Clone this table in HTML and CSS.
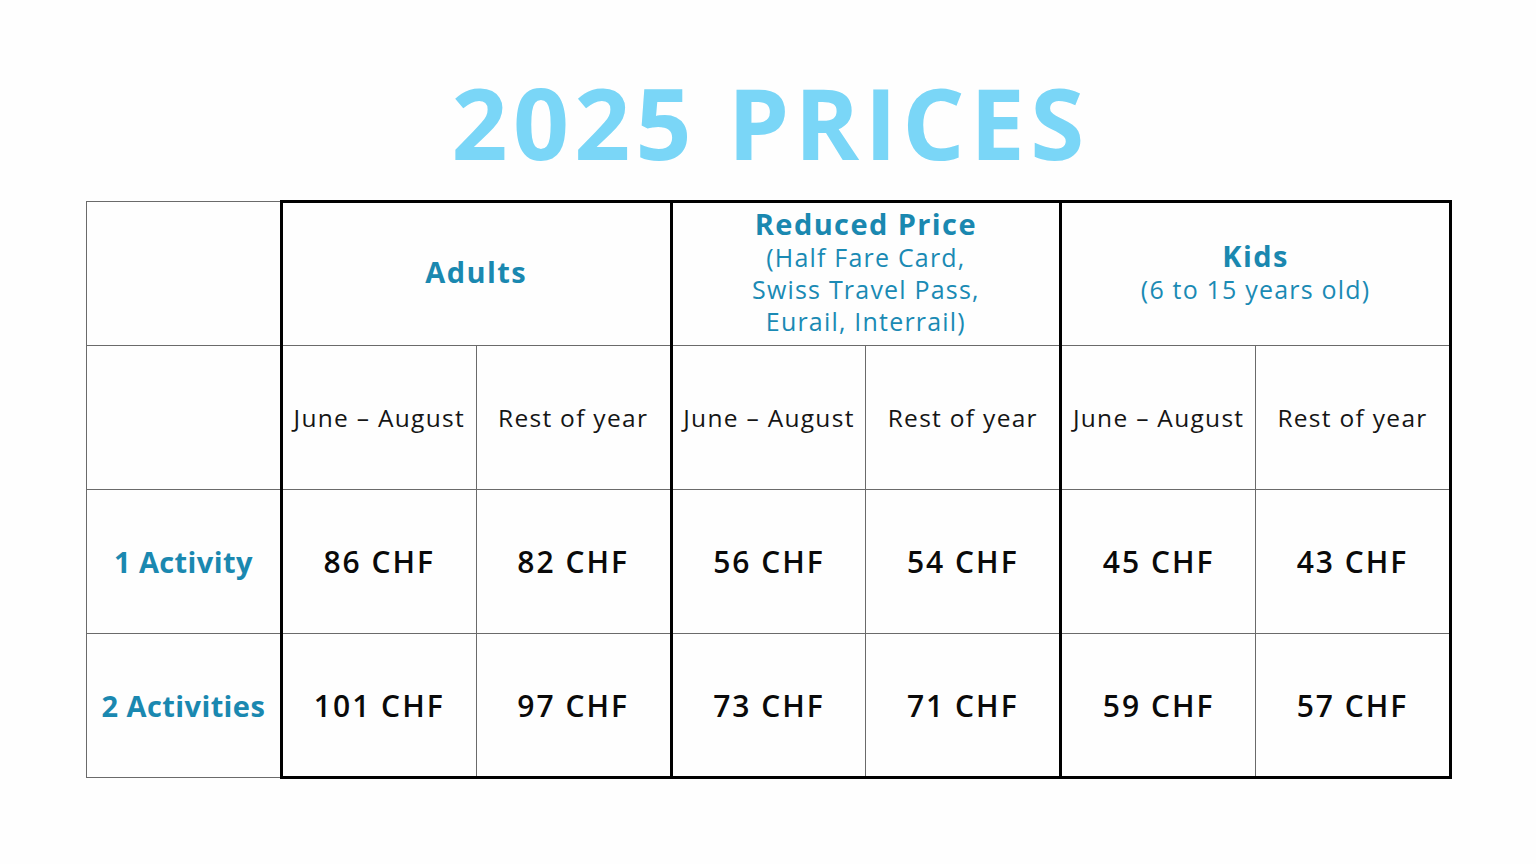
FILE: index.html
```html
<!DOCTYPE html>
<html lang="en">
<head>
<meta charset="utf-8">
<title>2025 Prices</title>
<link rel="stylesheet" href="styles.css">
</head>
<body>
<main class="page">
  <h1 class="title">2025 PRICES</h1>
  <table class="prices">
    <tr class="row-head">
      <td class="side top"></td>
      <th colspan="2" class="grp top"><span class="h">Adults</span></th>
      <th colspan="2" class="grp top"><span class="h">Reduced Price</span><span class="sub">(Half Fare Card,<br>Swiss Travel Pass,<br>Eurail, Interrail)</span></th>
      <th colspan="2" class="grp top right"><span class="h">Kids</span><span class="sub">(6 to 15 years old)</span></th>
    </tr>
    <tr>
      <td class="side"></td>
      <td class="season gl">June – August</td>
      <td class="season">Rest of year</td>
      <td class="season gl">June – August</td>
      <td class="season">Rest of year</td>
      <td class="season gl">June – August</td>
      <td class="season right">Rest of year</td>
    </tr>
    <tr>
      <th class="side label">1 Activity</th>
      <td class="price gl">86 CHF</td>
      <td class="price">82 CHF</td>
      <td class="price gl">56 CHF</td>
      <td class="price">54 CHF</td>
      <td class="price gl">45 CHF</td>
      <td class="price right">43 CHF</td>
    </tr>
    <tr class="row-last">
      <th class="side label">2 Activities</th>
      <td class="price gl bottom">101 CHF</td>
      <td class="price bottom">97 CHF</td>
      <td class="price gl bottom">73 CHF</td>
      <td class="price bottom">71 CHF</td>
      <td class="price gl bottom">59 CHF</td>
      <td class="price right bottom">57 CHF</td>
    </tr>
  </table>
</main>
</body>
</html>
```

FILE: styles.css
```css
* { box-sizing: border-box; }
html, body {
  margin: 0;
  padding: 0;
  background: #fefefe;
}
body {
  font-family: "Open Sans", "Liberation Sans", sans-serif;
  color: #111;
  width: 1536px;
  height: 864px;
  overflow: hidden;
}
.page {
  display: flex;
  flex-direction: column;
  align-items: center;
  padding-top: 66px;
}
.title {
  margin: 0;
  font-size: 98px;
  line-height: 113px;
  font-weight: 700;
  color: #7ad6f7;
  letter-spacing: 5.3px;
  padding-left: 5px;
}
.prices {
  margin-top: 21px;
  margin-left: 2px;
  border-collapse: collapse;
  table-layout: fixed;
  width: 1366px;
}
.prices tr { height: 144px; }
.prices td, .prices th {
  border: 1px solid #6a6a6a;
  text-align: center;
  vertical-align: middle;
  padding: 0;
}
.grp {
  border-left: 3px solid #000 !important;
  border-top: 3px solid #000 !important;
  font-weight: 400;
  color: #1a88b0;
  padding-bottom: 4px !important;
}
.gl { border-left: 3px solid #000 !important; }
.right { border-right: 3px solid #000 !important; }
.bottom { border-bottom: 3px solid #000 !important; }
.h {
  display: block;
  font-size: 29px;
  font-weight: 700;
  line-height: 34px;
  letter-spacing: 1.4px;
  color: #1a88b0;
}
.sub {
  display: block;
  font-size: 25px;
  line-height: 32px;
  letter-spacing: 1.2px;
  color: #1a8ab4;
  font-weight: 400;
}
.season {
  font-size: 24.5px;
  font-weight: 400;
  letter-spacing: 1.3px;
  color: #151515;
  white-space: nowrap;
}
.price {
  font-size: 30px;
  font-weight: 600;
  letter-spacing: 2px;
  color: #0a0a0a;
}
.label {
  font-size: 29px;
  font-weight: 700;
  letter-spacing: 0.4px;
  color: #1a88b0;
  white-space: nowrap;
}
```
